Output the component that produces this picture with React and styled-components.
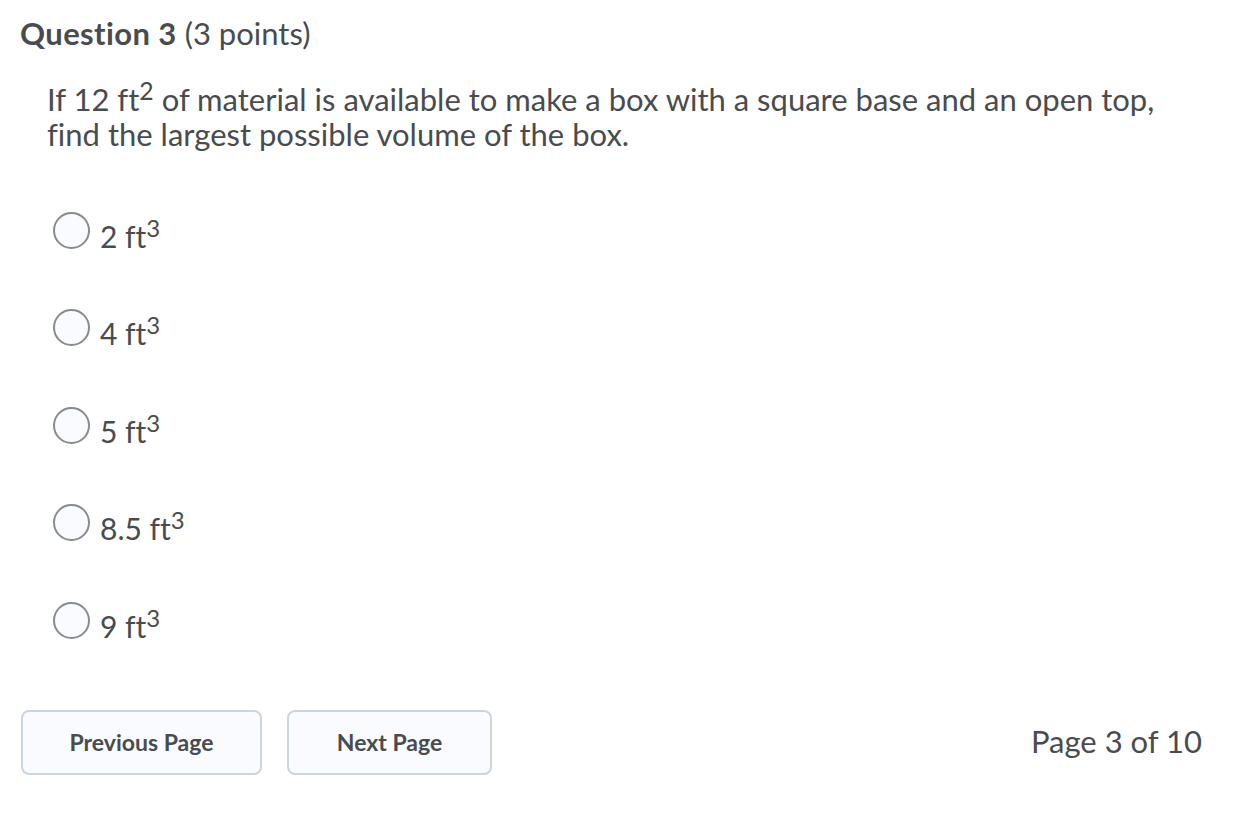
import React from 'react';
import styled, { createGlobalStyle } from 'styled-components';

const GlobalStyle = createGlobalStyle`
  body {
    margin: 0;
    background: #ffffff;
    font-family: Lato, "Liberation Sans", sans-serif;
    font-variant-ligatures: none;
    color: #494c4e;
  }
`;

const Page = styled.div`
  width: 1254px;
  height: 822px;
  box-sizing: border-box;
  padding: 13px 52px 0 20px;
`;

const Heading = styled.h2`
  margin: 0;
  font-size: 31px;
  line-height: 40px;
  font-weight: 400;
  color: #494c4e;
`;

const Strong = styled.span`
  font-weight: 700;
  letter-spacing: 0.4px;
`;

const Prompt = styled.p`
  margin: 28.5px 0 0 27px;
  font-size: 31px;
  line-height: 35px;
  color: #494c4e;

  sup {
    font-size: 0.8em;
    line-height: 0;
  }
`;

const Options = styled.div`
  display: flex;
  flex-direction: column;
  gap: 59.5px;
  margin: 60px 0 0 33px;
`;

const Option = styled.label`
  display: flex;
  align-items: flex-start;
  gap: 10px;
  height: 38px;
  font-size: 30px;
  line-height: 38px;
  color: #494c4e;
`;

const OptionText = styled.span`
  padding-top: 5px;

  sup {
    font-size: 0.8em;
    line-height: 0;
  }
`;

const Radio = styled.span`
  width: 33px;
  height: 33px;
  border-radius: 50%;
  border: 2px solid #868c8f;
  background: #f9fbff;
  flex-shrink: 0;
`;

const Footer = styled.div`
  display: flex;
  align-items: center;
  gap: 25px;
  margin: 70px 0 0 1px;
`;

const Button = styled.button`
  height: 65px;
  width: ${p => p.$width}px;
  padding: 0;
  border: 2px solid #cdd5dc;
  border-radius: 8px;
  background: #f9fbff;
  font-family: Lato, "Liberation Sans", sans-serif;
  font-variant-ligatures: none;
  font-weight: 700;
  font-size: 23px;
  color: #494c4e;
`;

const PageCount = styled.div`
  margin: 0 0 2px auto;
  font-size: 31px;
  color: #494c4e;
`;

const choices = ['2', '4', '5', '8.5', '9'];

const App = () => (
  <Page>
    <GlobalStyle />
    <Heading>
      <Strong>Question 3</Strong> (3 points)
    </Heading>
    <Prompt>
      If 12 ft<sup>2</sup> of material is available to make a box with a square base and an open top,
      <br />
      find the largest possible volume of the box.
    </Prompt>
    <Options>
      {choices.map(c => (
        <Option key={c}>
          <Radio />
          <OptionText>
            {c} ft<sup>3</sup>
          </OptionText>
        </Option>
      ))}
    </Options>
    <Footer>
      <Button $width={241}>Previous Page</Button>
      <Button $width={205}>Next Page</Button>
      <PageCount>Page 3 of 10</PageCount>
    </Footer>
  </Page>
);

export default App;
